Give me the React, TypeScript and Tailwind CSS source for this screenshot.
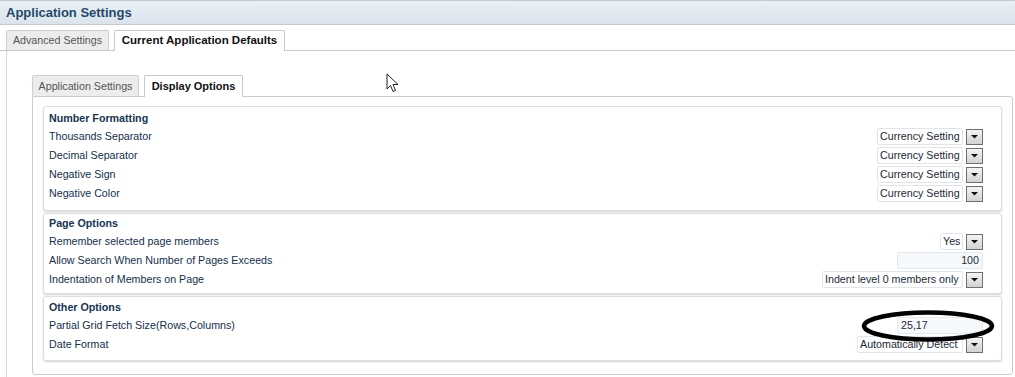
import React from "react";

const Drop = () => (
  <div className="ml-[3px] flex h-[16px] w-[17px] shrink-0 items-center justify-center border border-[#6f6f6f] bg-gradient-to-b from-[#f4f4f4] to-[#d2d2d2]">
    <svg width="9" height="5" viewBox="0 0 9 5">
      <path d="M1 1 L8 1 L4.5 4.5 Z" fill="#111" />
    </svg>
  </div>
);

const Select = ({ value, w }: { value: string; w: string }) => (
  <div className="flex items-center">
    <div className={`flex h-[17px] items-center overflow-hidden whitespace-nowrap rounded-[2px] border border-[#e1e5ea] bg-white pl-[2px] text-[10.7px] text-[#1e2a36] ${w}`}>
      {value}
    </div>
    <Drop />
  </div>
);

const Input = ({ value, right }: { value: string; right?: boolean }) => (
  <div
    className={`flex h-[17px] w-[86px] items-center whitespace-nowrap rounded-[2px] border border-[#e4e8ec] bg-[#f6f9fc] px-[3px] text-[10.7px] text-[#1e2a36] ${right ? "justify-end" : "justify-start"}`}
  >
    {value}
  </div>
);

const Row = ({ label, children }: { label: string; children: React.ReactNode }) => (
  <div className="flex h-[19px] items-center justify-between">
    <span className="whitespace-nowrap text-[10.7px] text-[#15304b]">{label}</span>
    {children}
  </div>
);

const Section = ({ title, children, cls }: { title: string; children: React.ReactNode; cls: string }) => (
  <div className={`rounded-[3px] border border-[#dedede] bg-white pl-[5px] pr-[18px] shadow-[0_1px_2px_rgba(0,0,0,0.18)] ${cls}`}>
    <div className="flex h-[17px] items-center whitespace-nowrap text-[10.7px] font-bold text-[#17354f]">{title}</div>
    {children}
  </div>
);

export default function App() {
  return (
    <div
      className="relative h-[377px] w-[1015px] overflow-hidden bg-white"
      style={{ fontFamily: '"Liberation Sans", Arial, sans-serif' }}
    >
      {/* Header */}
      <div className="flex h-[25px] items-center border-y border-[#c2cad3] bg-gradient-to-b from-[#ebf0f5] to-[#dbe3ec] pl-[6px] text-[13px] font-bold text-[#1f4a6b]">
        Application Settings
      </div>

      {/* Outer tabs */}
      <div className="mt-[5px] flex items-end border-b border-[#c8c8c8] pl-[6px]">
        <div className="flex h-[20px] w-[103px] items-center justify-center whitespace-nowrap rounded-t-[2px] border border-b-0 border-[#cfcfcf] bg-[#ececec] text-[10.7px] text-[#555]">
          Advanced Settings
        </div>
        <div className="-mb-px ml-[5px] flex h-[21px] w-[171px] items-center justify-center whitespace-nowrap rounded-t-[2px] border border-b-0 border-[#c8c8c8] bg-white text-[11.5px] font-bold text-[#111]">
          Current Application Defaults
        </div>
      </div>

      {/* Content */}
      <div className="ml-[6px] h-[330px] border-l border-[#d6d6d6] pl-[25px] pr-[2px] pt-[24px]">
        {/* Inner tabs */}
        <div className="flex items-end">
          <div className="flex h-[21px] w-[107px] items-center justify-center whitespace-nowrap rounded-t-[2px] border border-b-0 border-[#cfcfcf] bg-[#ececec] text-[10.7px] text-[#555]">
            Application Settings
          </div>
          <div className="-mb-px ml-[5px] flex h-[22px] w-[99px] items-center justify-center whitespace-nowrap rounded-t-[2px] border border-b-0 border-[#c8c8c8] bg-white text-[11px] font-bold text-[#111]">
            Display Options
          </div>
        </div>
        <div className="h-[279px] rounded-b-[3px] rounded-tr-[3px] border border-[#cccccc] px-[10px] pt-[9px]">
          <Section title="Number Formatting" cls="pt-[3px] pb-[7px]">
            <Row label="Thousands Separator">
              <Select value="Currency Setting" w="w-[86px]" />
            </Row>
            <Row label="Decimal Separator">
              <Select value="Currency Setting" w="w-[86px]" />
            </Row>
            <Row label="Negative Sign">
              <Select value="Currency Setting" w="w-[86px]" />
            </Row>
            <Row label="Negative Color">
              <Select value="Currency Setting" w="w-[86px]" />
            </Row>
          </Section>
          <Section title="Page Options" cls="mt-[2px] pt-[1px] pb-[4px]">
            <Row label="Remember selected page members">
              <Select value="Yes" w="w-[23px]" />
            </Row>
            <Row label="Allow Search When Number of Pages Exceeds">
              <Input value="100" right />
            </Row>
            <Row label="Indentation of Members on Page">
              <Select value="Indent level 0 members only" w="w-[141px]" />
            </Row>
          </Section>
          <Section title="Other Options" cls="mt-[2px] pt-[2px] pb-[6px]">
            <Row label="Partial Grid Fetch Size(Rows,Columns)">
              <Input value="25,17" />
            </Row>
            <Row label="Date Format">
              <Select value="Automatically Detect" w="w-[106px]" />
            </Row>
          </Section>
        </div>
      </div>

      {/* Hand-drawn ellipse annotation */}
      <svg className="absolute left-[860px] top-[308px]" width="136" height="36" viewBox="0 0 136 36">
        <ellipse cx="68" cy="18" rx="64" ry="13.5" fill="none" stroke="#000" strokeWidth="4.5" />
      </svg>

      {/* Mouse cursor */}
      <svg className="absolute left-[386px] top-[73px]" width="14" height="21" viewBox="0 0 14 21">
        <path d="M1 1 L1 16 L4.5 12.5 L7 18.5 L9.5 17.5 L7 11.5 L12 11.5 Z" fill="#fff" stroke="#222" strokeWidth="1" strokeLinejoin="round" />
      </svg>
    </div>
  );
}
